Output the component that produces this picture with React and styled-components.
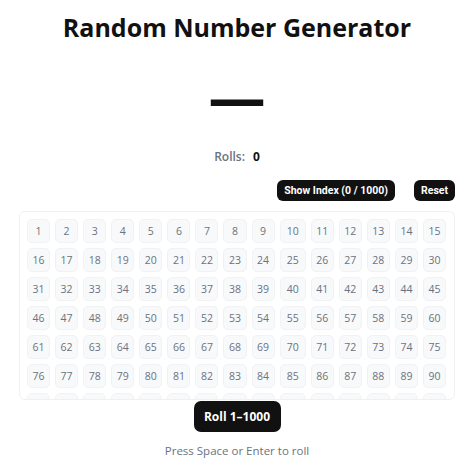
import { useState, useEffect } from "react";
import styled, { createGlobalStyle } from "styled-components";

const GlobalStyle = createGlobalStyle`
  * { box-sizing: border-box; }
  body {
    margin: 0;
    background: #ffffff;
    font-family: "Open Sans", "Liberation Sans", sans-serif;
    color: #111111;
  }
`;

const MAX = 1000;

const Page = styled.main`
  display: flex;
  flex-direction: column;
  align-items: center;
  padding: 9px 19px 0 19px;
`;

const Title = styled.h1`
  margin: 0;
  font-size: 25px;
  font-weight: 700;
  line-height: 36px;
  color: #111111;
`;

const Display = styled.div`
  margin-top: 21px;
  height: 64px;
  font-size: 57px;
  font-weight: 700;
  line-height: 60px;
  color: #111111;
`;

const Stats = styled.div`
  margin-top: 19px;
  display: flex;
  gap: 8px;
  font-size: 12px;
  line-height: 16px;
`;

const StatLabel = styled.span`
  color: #6b7280;
  font-weight: 600;
`;

const StatValue = styled.span`
  color: #111111;
  font-weight: 700;
`;

const Controls = styled.div`
  align-self: stretch;
  margin-top: 15px;
  display: flex;
  justify-content: flex-end;
  gap: 19px;
`;

const SmallButton = styled.button`
  height: 21px;
  padding: 0 7px;
  border: none;
  border-radius: 6px;
  background: #111111;
  color: #ffffff;
  font-family: Roboto, "Liberation Sans", sans-serif;
  font-size: 10.5px;
  font-weight: 700;
  cursor: pointer;
`;

const GridBox = styled.div`
  align-self: stretch;
  margin-top: 10px;
  height: 189px;
  overflow-y: auto;
  padding: 7px 8px 7px 7px;
  border: 1px solid #eef0f3;
  border-radius: 6px;
  scrollbar-width: none;
  &::-webkit-scrollbar { display: none; }
`;

const Grid = styled.div`
  display: grid;
  grid-template-columns: repeat(15, 1fr);
  column-gap: 5px;
  row-gap: 5px;
`;

const Cell = styled.div`
  height: 24px;
  display: flex;
  align-items: center;
  justify-content: center;
  border: 1px solid #f1f2f4;
  border-radius: 5px;
  background: ${(p) => (p.$hit ? "#111111" : "#f8f9fa")};
  color: ${(p) => (p.$hit ? "#ffffff" : "#6b7280")};
  font-size: 10.5px;
`;

const RollButton = styled.button`
  margin-top: 1px;
  width: 87px;
  height: 31px;
  border: none;
  border-radius: 7px;
  background: #111111;
  color: #ffffff;
  font-family: "Open Sans", "Liberation Sans", sans-serif;
  font-size: 12px;
  font-weight: 700;
  cursor: pointer;
`;

const Hint = styled.p`
  margin: 11px 0 0 0;
  font-size: 11.5px;
  line-height: 16px;
  color: #6b7280;
`;

export default function App() {
  const [current, setCurrent] = useState(null);
  const [rolled, setRolled] = useState([]);
  const [showIndex, setShowIndex] = useState(true);

  const roll = () => {
    const n = Math.floor(Math.random() * MAX) + 1;
    setCurrent(n);
    setRolled((r) => (r.includes(n) ? r : [...r, n]));
  };

  const reset = () => {
    setCurrent(null);
    setRolled([]);
  };

  useEffect(() => {
    const onKey = (e) => {
      if (e.code === "Space" || e.key === "Enter") {
        e.preventDefault();
        roll();
      }
    };
    window.addEventListener("keydown", onKey);
    return () => window.removeEventListener("keydown", onKey);
  }, []);

  const numbers = Array.from({ length: MAX }, (_, i) => i + 1);

  return (
    <>
      <GlobalStyle />
      <Page>
        <Title>Random Number Generator</Title>
        <Display>{current ?? "—"}</Display>
        <Stats>
          <StatLabel>Rolls:</StatLabel>
          <StatValue>{rolled.length}</StatValue>
        </Stats>
        <Controls>
          <SmallButton onClick={() => setShowIndex(!showIndex)}>
            {showIndex ? "Show" : "Hide"} Index ({rolled.length} / {MAX})
          </SmallButton>
          <SmallButton onClick={reset}>Reset</SmallButton>
        </Controls>
        {showIndex && (
          <GridBox>
            <Grid>
              {numbers.map((n) => (
                <Cell key={n} $hit={rolled.includes(n)}>
                  {n}
                </Cell>
              ))}
            </Grid>
          </GridBox>
        )}
        <RollButton onClick={roll}>Roll 1–{MAX}</RollButton>
        <Hint>Press Space or Enter to roll</Hint>
      </Page>
    </>
  );
}
